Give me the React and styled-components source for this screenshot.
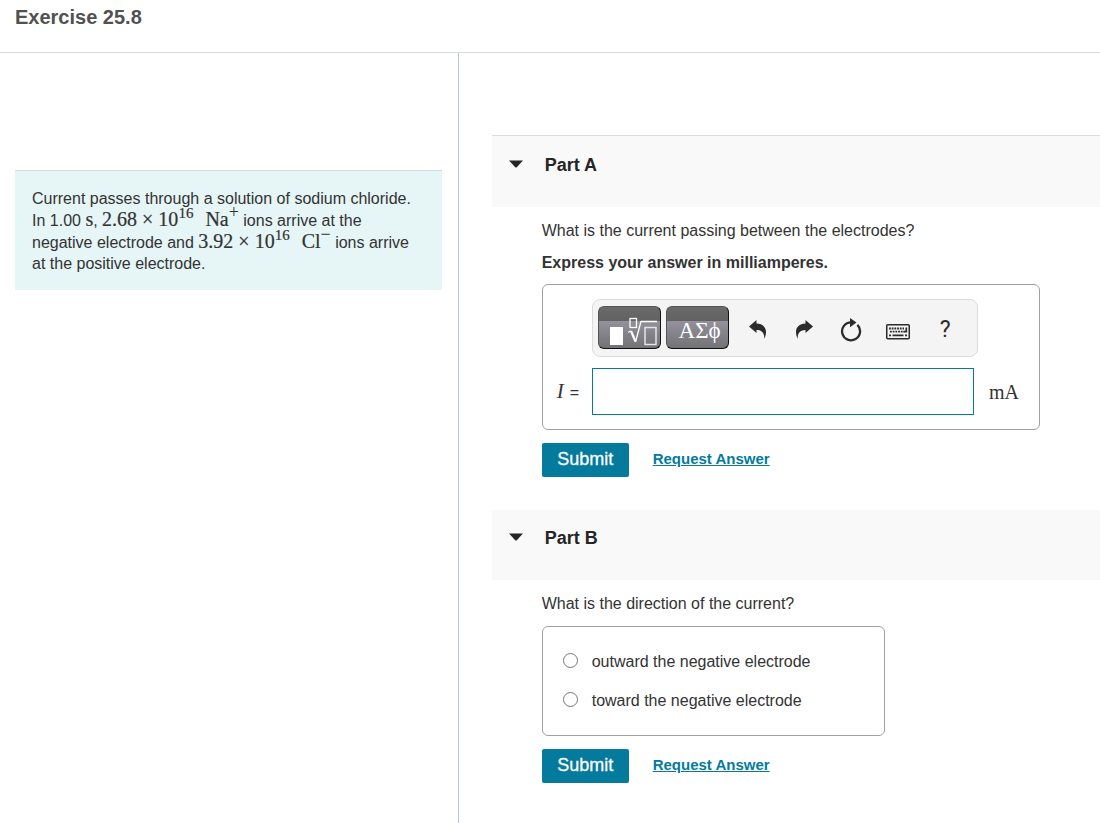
import React, { useState } from "react";
import styled, { createGlobalStyle } from "styled-components";

const colors = {
  text: "#333333",
  heading: "#515151",
  teal: "#047a9c",
  border: "#a0a0a0",
  line: "#dcdcdc",
};

const GlobalStyle = createGlobalStyle`
  * {
    box-sizing: border-box;
  }
  body {
    margin: 0;
    background-color: #ffffff;
    color: ${colors.text};
    font-family: "Liberation Sans", Arial, sans-serif;
    font-size: 16px;
    line-height: 22px;
  }
`;

const Page = styled.div`
  display: flex;
  flex-direction: column;
  min-height: 100vh;
`;

const Header = styled.header`
  padding: 6px 15px 24px;
  border-bottom: 1px solid ${colors.line};

  h1 {
    margin: 0;
    font-size: 20px;
    line-height: 22px;
    color: ${colors.heading};
  }
`;

const Columns = styled.div`
  display: flex;
  flex: 1;
`;

const Sidebar = styled.aside`
  width: 41.7%;
  padding: 117px 16px 0 15px;
  border-right: 1px solid #b4c8d8;
`;

const Statement = styled.p`
  margin: 0;
  padding: 17px 24px 16px 17px;
  border-top: 1px solid #d6dcdc;
  background-color: #e6f5f6;
  line-height: 21px;
`;

const MathText = styled.span`
  font-family: "Liberation Serif", "Times New Roman", serif;
  font-size: 20px;
  line-height: 21px;
  white-space: nowrap;
  -webkit-text-stroke: 0.2px currentColor;
`;

const Exponent = styled.sup`
  font-size: 15px;
  line-height: 0;
`;

const Charge = styled.sup`
  font-size: 18px;
  line-height: 0;
  -webkit-text-stroke: 0;
`;

const Unit = styled.span`
  margin-left: 7px;
`;

const Main = styled.main`
  flex: 1;
  min-width: 0;
  padding: 82px 0 0 33px;
`;

const PartHeader = styled.div`
  padding: ${(props) => (props.$ruled ? "18px" : "17px")} 16px 31px;
  background-color: #f9f9f9;
  border-top: ${(props) => (props.$ruled ? `1px solid ${colors.line}` : "none")};

  h2 {
    margin: 0;
    line-height: 22px;
  }
`;

const PartToggle = styled.button`
  display: flex;
  align-items: center;
  gap: 21px;
  padding: 0;
  border: none;
  background: none;
  color: #252525;
  font: bold 18px/22px "Liberation Sans", Arial, sans-serif;
  cursor: pointer;

  svg {
    width: 16px;
    height: 10px;
  }
`;

const PartBody = styled.div`
  padding: 13px 60px 33px 50px;
`;

const Question = styled.p`
  margin: 0 0 10px;
`;

const Instruction = styled.p`
  margin: 0 0 10px;
  font-weight: bold;
`;

const AnswerBox = styled.div`
  display: grid;
  grid-template-columns: 49px 1fr 65px;
  row-gap: 11px;
  align-items: center;
  padding: 14px 0;
  border: 1px solid ${colors.border};
  border-radius: 6px;
`;

const Toolbar = styled.div`
  grid-column: 2 / 4;
  justify-self: start;
  display: flex;
  align-items: center;
  padding: 6px 8px 7px 5px;
  border: 1px solid ${colors.line};
  border-radius: 8px;
  background-color: #f4f4f4;
`;

const PaletteButton = styled.button`
  display: flex;
  align-items: flex-end;
  justify-content: flex-end;
  width: 63px;
  height: 43px;
  margin-right: 5px;
  padding: 0 ${(props) => props.$inset || "2px"} 2px 0;
  border: 1px solid #111111;
  border-top-color: #555555;
  border-left-color: #555555;
  border-radius: 6px;
  background: linear-gradient(
    #6a6a6a 0,
    #626262 14px,
    #93919c 14px,
    #727276 100%
  );
  color: #ffffff;
  cursor: pointer;
`;

const GreekLabel = styled.span`
  font-family: "Liberation Serif", serif;
  font-size: 23px;
  line-height: 30px;
`;

const IconButton = styled.button`
  display: flex;
  align-items: center;
  justify-content: center;
  width: 47px;
  height: 43px;
  padding: 4px 0 0;
  border: none;
  background: none;
  color: #2b2b2b;
  font: 23px/24px Roboto, sans-serif;
  cursor: pointer;
`;

const VariableLabel = styled.label`
  display: flex;
  align-items: baseline;
  gap: 6px;
  padding-left: 14px;

  i {
    font-family: "Liberation Serif", serif;
    font-size: 21px;
  }
`;

const AnswerInput = styled.input`
  width: 100%;
  height: 47px;
  padding: 0 10px;
  border: 1px solid ${colors.teal};
  border-radius: 0;
  outline: none;
  font: 20px "Liberation Serif", serif;
`;

const AnswerUnit = styled.span`
  padding-left: 15px;
  font-family: "Liberation Serif", serif;
  font-size: 20px;
`;

const Choices = styled.fieldset`
  display: flex;
  flex-direction: column;
  gap: 17px;
  width: fit-content;
  margin: 11px 0 0;
  padding: 24px 73px 23px 20px;
  border: 1px solid ${colors.border};
  border-radius: 6px;
`;

const Choice = styled.label`
  display: flex;
  align-items: center;
  gap: 14px;

  input {
    width: 15px;
    height: 15px;
    margin: 0 0 3px;
  }
`;

const Actions = styled.div`
  display: flex;
  align-items: center;
  gap: 24px;
  margin-top: 13px;
`;

const SubmitButton = styled.button`
  width: 87px;
  height: 34px;
  padding: 0 0 2px;
  border: none;
  border-radius: 2px;
  background-color: ${colors.teal};
  color: #ffffff;
  font: 18px "Liberation Sans", Arial, sans-serif;
  -webkit-text-stroke: 0.3px #ffffff;
  cursor: pointer;
`;

const RequestLink = styled.a`
  padding-bottom: 2px;
  color: ${colors.teal};
  font-size: 15px;
  font-weight: bold;
`;

const TemplatesIcon = () => (
  <svg width="50" height="30" viewBox="0 0 50 30" fill="none" stroke="#fff">
    <rect x="2" y="11" width="13" height="18" fill="#fff" stroke="none" />
    <rect x="22" y="2.5" width="6.500" height="9" strokeWidth="1.3" />
    <path d="M20 16.200l3-1.200" strokeWidth="1.2" />
    <path d="M23 15l4.500 10.500" strokeWidth="2.200" />
    <path d="M27.500 26L33 5.500H49" strokeWidth="1.3" />
    <rect
      x="37"
      y="11.500"
      width="11"
      height="17"
      stroke="#e4e4e8"
      strokeWidth="1.500"
    />
  </svg>
);

const UndoIcon = () => (
  <svg width="17" height="19" viewBox="0 0 17 19" fill="currentColor">
    <path d="M0 6.500L7.500 0V3.500C13.500 3.700 17 7 17 12c0 3-1 5-1.700 7C15.500 13.500 13.500 10 7.500 10V13z" />
  </svg>
);

const RedoIcon = () => (
  <svg width="17" height="19" viewBox="0 0 17 19" fill="currentColor">
    <path d="M17 6.500L9.500 0V3.500C3.500 3.700 0 7 0 12c0 3 1 5 1.700 7C1.500 13.500 3.500 10 9.500 10V13z" />
  </svg>
);

const ResetIcon = () => (
  <svg width="22" height="24" viewBox="0 0 22 24" fill="none">
    <path
      d="M17.400 6.900A9 9 0 1 1 11 4.300"
      stroke="currentColor"
      strokeWidth="2.300"
    />
    <path d="M10 0l6.500 4.600L10 9.200z" fill="currentColor" />
  </svg>
);

const KeyboardIcon = () => (
  <svg width="24" height="20" viewBox="0 0 24 20" fill="none">
    <g transform="translate(0 4)" stroke="currentColor" strokeWidth="1.500">
      <rect x="0.750" y="0.750" width="22.500" height="14" rx="1" />
      <path
        d="M3 4.500h15M4 7.700h13"
        strokeWidth="1.800"
        strokeDasharray="1.800 0.900"
      />
      <path d="M3 11.300h2M6.500 11.300h11M19 11.300h2M20.300 3.500v4.200h-3" strokeWidth="1.700" />
    </g>
  </svg>
);

const Part = ({ title, ruled, children }) => {
  const [open, setOpen] = useState(true);

  return (
    <section>
      <PartHeader $ruled={ruled}>
        <h2>
          <PartToggle aria-expanded={open} onClick={() => setOpen(!open)}>
            <svg viewBox="0 0 16 10">
              <path d="M1 0.500h14L9 7q-1 1-2 0z" fill="currentColor" />
            </svg>
            {title}
          </PartToggle>
        </h2>
      </PartHeader>
      {open && <PartBody>{children}</PartBody>}
    </section>
  );
};

const SubmitRow = () => (
  <Actions>
    <SubmitButton>Submit</SubmitButton>
    <RequestLink href="#request">Request Answer</RequestLink>
  </Actions>
);

const choices = [
  { value: "outward", label: "outward the negative electrode" },
  { value: "toward", label: "toward the negative electrode" },
];

const App = () => {
  const [answer, setAnswer] = useState("");
  const [direction, setDirection] = useState(null);

  return (
    <>
      <GlobalStyle />
      <Page>
        <Header>
          <h1>Exercise 25.8</h1>
        </Header>
        <Columns>
          <Sidebar>
            <Statement>
              Current passes through a solution of sodium chloride. In 1.00{" "}
              <MathText>s</MathText>,{" "}
              <MathText>
                2.68 × 10<Exponent>16</Exponent> <Unit>Na</Unit>
                <Charge>+</Charge>
              </MathText>{" "}
              ions arrive at the negative electrode and{" "}
              <MathText>
                3.92 × 10<Exponent>16</Exponent> <Unit>Cl</Unit>
                <Charge>−</Charge>
              </MathText>{" "}
              ions arrive at the positive electrode.
            </Statement>
          </Sidebar>
          <Main>
            <Part title="Part A" ruled>
              <Question>
                What is the current passing between the electrodes?
              </Question>
              <Instruction>Express your answer in milliamperes.</Instruction>
              <AnswerBox>
                <Toolbar>
                  <PaletteButton aria-label="Templates">
                    <TemplatesIcon />
                  </PaletteButton>
                  <PaletteButton aria-label="Symbols" $inset="7px">
                    <GreekLabel>ΑΣϕ</GreekLabel>
                  </PaletteButton>
                  <IconButton aria-label="Undo">
                    <UndoIcon />
                  </IconButton>
                  <IconButton aria-label="Redo">
                    <RedoIcon />
                  </IconButton>
                  <IconButton aria-label="Reset">
                    <ResetIcon />
                  </IconButton>
                  <IconButton aria-label="Keyboard shortcuts">
                    <KeyboardIcon />
                  </IconButton>
                  <IconButton aria-label="Help">?</IconButton>
                </Toolbar>
                <VariableLabel htmlFor="current">
                  <i>I</i> =
                </VariableLabel>
                <AnswerInput
                  id="current"
                  value={answer}
                  onChange={(e) => setAnswer(e.target.value)}
                />
                <AnswerUnit>mA</AnswerUnit>
              </AnswerBox>
              <SubmitRow />
            </Part>
            <Part title="Part B">
              <Question>What is the direction of the current?</Question>
              <Choices aria-label="Direction of the current">
                {choices.map(({ value, label }) => (
                  <Choice key={value}>
                    <input
                      type="radio"
                      name="direction"
                      value={value}
                      checked={direction === value}
                      onChange={() => setDirection(value)}
                    />
                    {label}
                  </Choice>
                ))}
              </Choices>
              <SubmitRow />
            </Part>
          </Main>
        </Columns>
      </Page>
    </>
  );
};

export default App;
